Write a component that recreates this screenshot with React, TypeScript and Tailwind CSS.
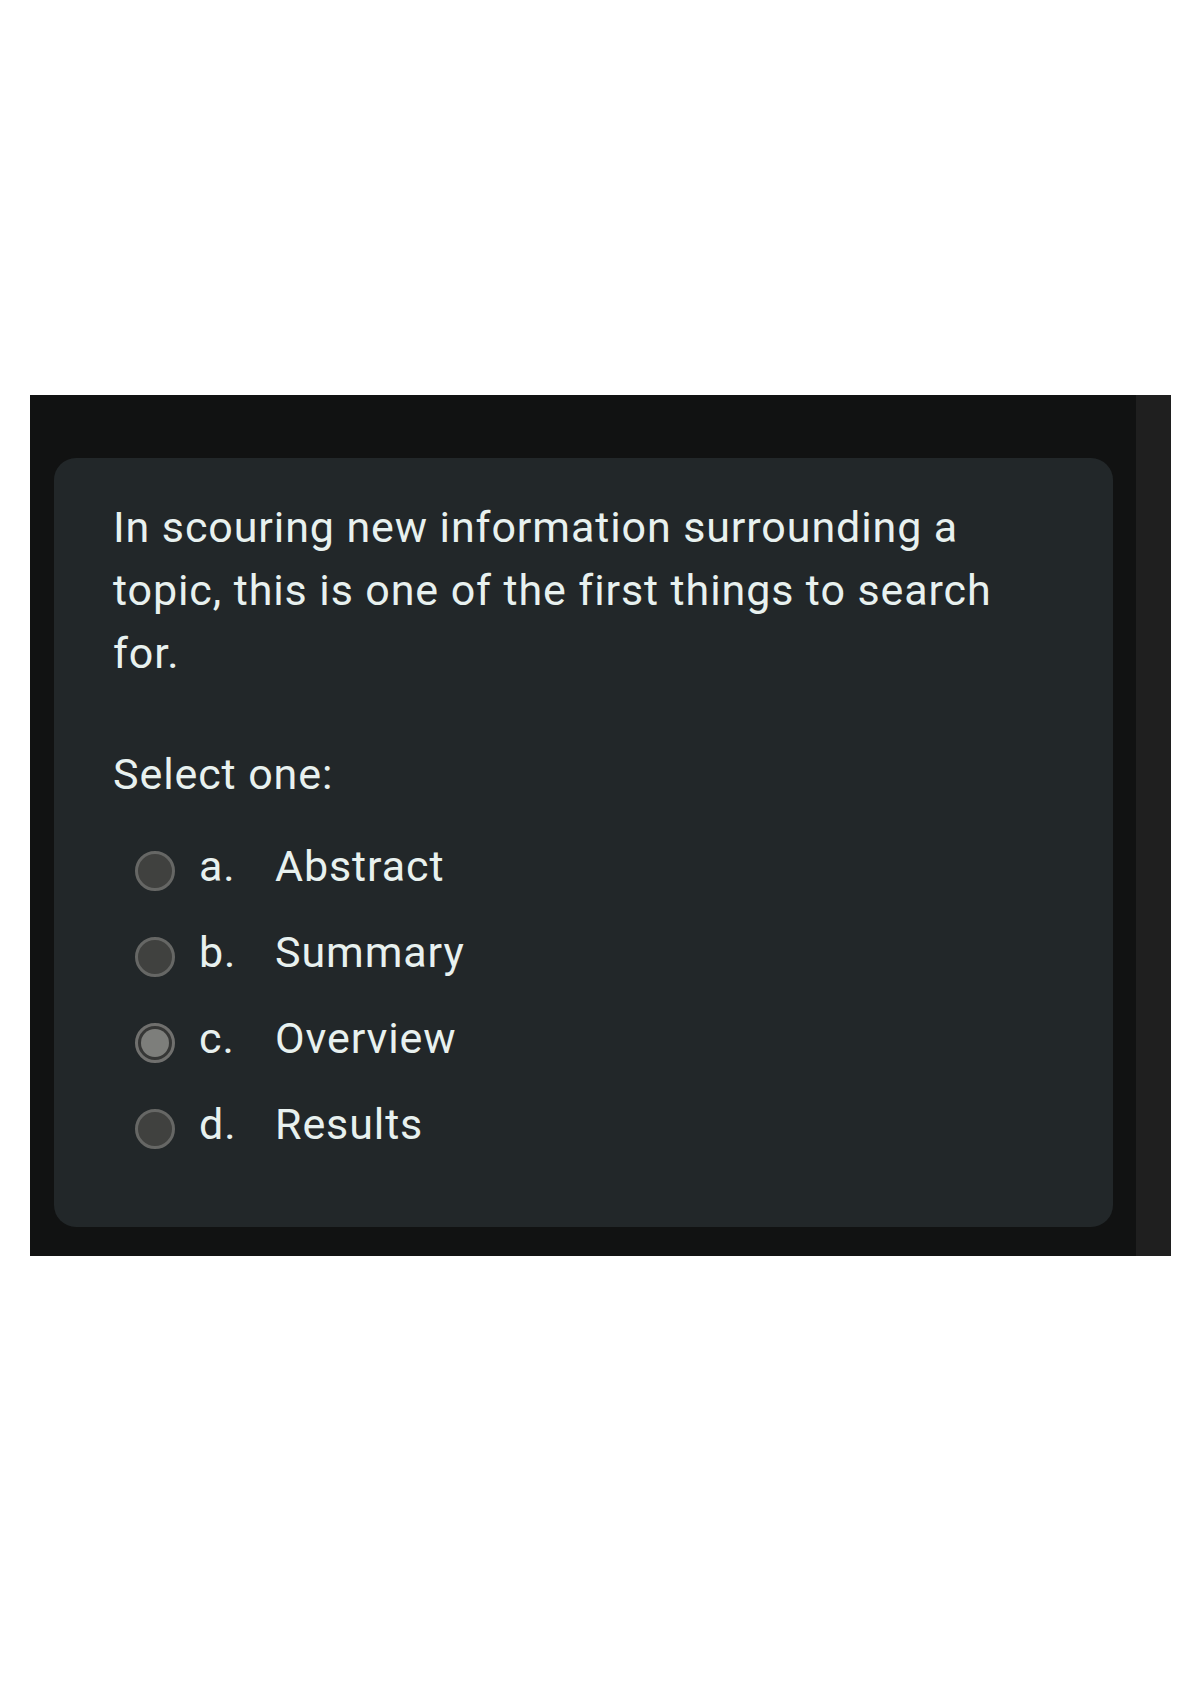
const options = [
  { letter: "a.", label: "Abstract", checked: false },
  { letter: "b.", label: "Summary", checked: false },
  { letter: "c.", label: "Overview", checked: true },
  { letter: "d.", label: "Results", checked: false },
];

function Radio({ checked }: { checked: boolean }) {
  if (checked) {
    return (
      <span className="flex size-[40px] shrink-0 items-center justify-center rounded-full border-[3px] border-[#70706e] bg-[#363736]">
        <span className="block size-[28px] rounded-full bg-[#7d7e7b]" />
      </span>
    );
  }
  return <span className="block size-[40px] shrink-0 rounded-full border-[3px] border-[#666765] bg-[#40413f]" />;
}

export default function App() {
  return (
    <div className="h-[1697px] w-[1200px] bg-white pt-[395px] font-['Roboto','Liberation_Sans',sans-serif] text-[#e8f1ef]">
      <div className="ml-[30px] flex h-[861px] w-[1141px]">
        <div className="flex-1 bg-[#111212] pb-[29px] pl-[24px] pr-[23px] pt-[63px]">
          <div className="h-full rounded-[22px] bg-[#222729] pl-[59px] pr-[100px] pt-[38px] text-[43px] tracking-[0.9px]">
            <p className="leading-[63px]">
              In scouring new information surrounding a topic, this is one of the first things to search for.
            </p>
            <p className="mt-[58px] leading-[63px]">Select one:</p>
            <ul className="mt-[17px]">
              {options.map((o) => (
                <li key={o.letter} className="flex h-[86px] items-center pl-[22px]">
                  <span className="block pt-[10px]">
                    <Radio checked={o.checked} />
                  </span>
                  <span className="ml-[24px] w-[76px]">{o.letter}</span>
                  <span>{o.label}</span>
                </li>
              ))}
            </ul>
          </div>
        </div>
        <div className="w-[35px] bg-[#1f1f1f]" />
      </div>
    </div>
  );
}
